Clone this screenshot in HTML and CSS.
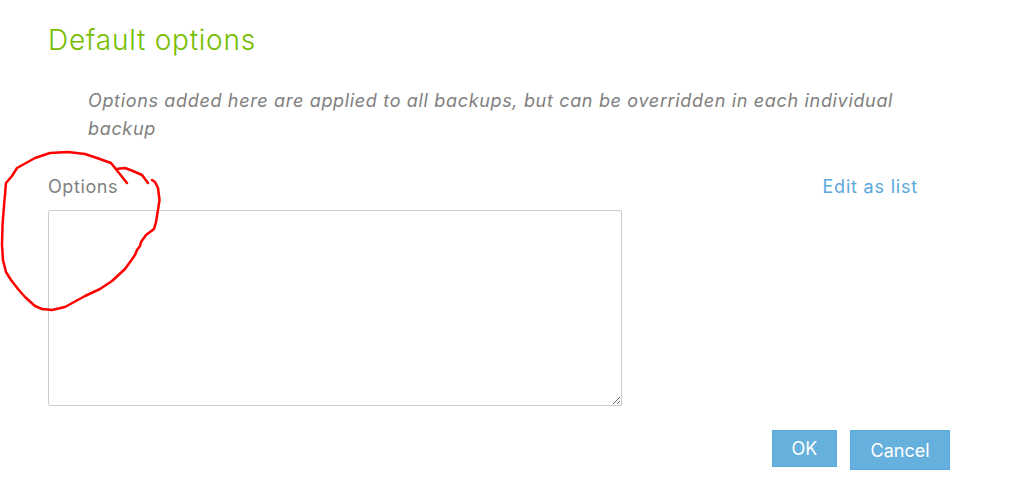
FILE: index.html
```html
<!doctype html>
<html lang="en">
<head>
    <meta charset="UTF-8">
    <link rel="stylesheet" href="styles.css">
    <title>Default options</title>
</head>
<body>
    <div class="page">
        <h1>Default options</h1>
        <p class="hint">Options added here are applied to all backups, but can be overridden in each individual backup</p>
        <div class="field-head">
            <label for="options">Options</label>
            <a class="edit-link" href="#">Edit as list</a>
        </div>
        <textarea id="options"></textarea>
        <div class="buttons">
            <button class="btn btn-ok">OK</button>
            <button class="btn btn-cancel">Cancel</button>
        </div>
    </div>
    <svg class="scribble" width="170" height="180" viewBox="0 0 170 180" fill="none" stroke="#f00" stroke-width="2.5" stroke-linejoin="round" stroke-linecap="round">
        <path d="M127 43L111 23L97 18L85 14L68 12L50 13L35 18L17 28L12 36L6 43L4.500 60L2.500 85L2 105L3 120L6 132L11 140L18 149L25 157L35 166L42 169L52 170L65 167L85 156L100 149L112 141L125 129L135 115L137 110L140 106L141 102L146 95L154 89L156 82L158 70L159.500 60L158 48L155 42L152 40"/>
        <path d="M116 29L125 28L133 31L142 35L148 43"/>
    </svg>
</body>
</html>
```
FILE: styles.css
```css
body{
    margin: 0;
    background: #fff;
    font-family: Inter, "Liberation Sans", sans-serif;
}
.page{
    padding: 24px 85px 0 48px;
}
h1{
    margin: 0;
    font-size: 28px;
    font-weight: 300;
    line-height: 33px;
    letter-spacing: 0.75px;
    color: #76bd00;
}
.hint{
    margin: 30px 50px 0 40px;
    font-size: 18px;
    font-style: italic;
    line-height: 28px;
    letter-spacing: 0.66px;
    color: #808080;
}
.field-head{
    display: flex;
    justify-content: space-between;
    margin-top: 31px;
    font-size: 18px;
    line-height: 26px;
    letter-spacing: 0.6px;
}
.field-head label{
    color: #808080;
}
.edit-link{
    color: #5aa9dc;
    text-decoration: none;
    margin-right: 32px;
    letter-spacing: 0.8px;
}
textarea{
    display: block;
    box-sizing: border-box;
    width: 574px;
    height: 196px;
    margin-top: 10px;
    border: 1px solid #ccc;
    border-radius: 2px;
    background: #fff;
}
.buttons{
    display: flex;
    align-items: flex-start;
    justify-content: flex-end;
    gap: 13px;
    margin-top: 24px;
}
.btn{
    box-sizing: border-box;
    border: 1px solid #5aa9dc;
    background: #66b0de;
    color: #fff;
    font-family: Inter, "Liberation Sans", sans-serif;
    font-size: 18px;
}
.btn-ok{
    width: 65px;
    height: 37px;
}
.btn-cancel{
    width: 100px;
    height: 40px;
}
.scribble{
    position: absolute;
    left: 0;
    top: 140px;
}
```
